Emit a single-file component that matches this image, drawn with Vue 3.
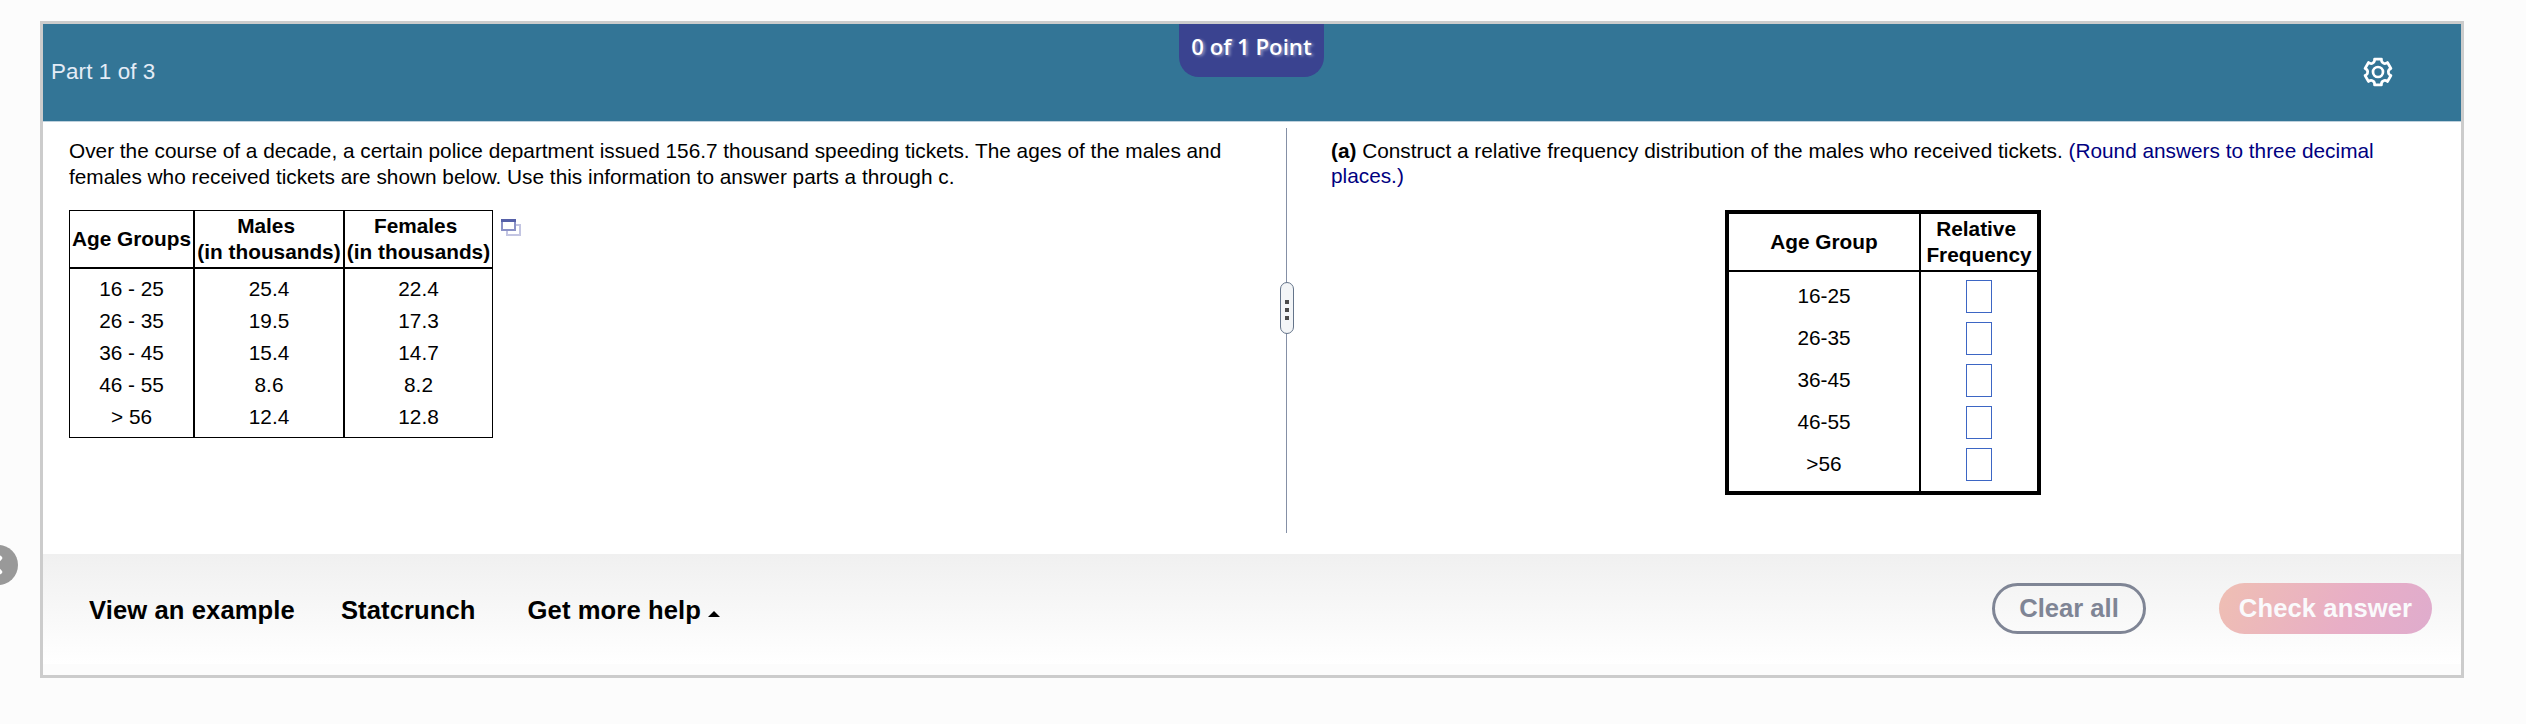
<template>
  <div class="page">
    <button class="prev" aria-label="Previous">
      <svg viewBox="0 0 40 40" width="40" height="40">
        <circle cx="20" cy="20" r="20" fill="#999" />
        <path d="M22 13 L15 20 L22 27" fill="none" stroke="#fff" stroke-width="4.5" stroke-linecap="round" />
      </svg>
    </button>

    <div class="player">
      <header class="top">
        <span class="part">Part 1 of 3</span>
        <span class="points">0 of 1 Point</span>
        <svg class="gear" viewBox="0 0 30 30" width="30" height="30">
          <path :d="gearPath" />
          <circle cx="15" cy="15" r="5" />
        </svg>
      </header>

      <main class="body">
        <section class="pane question">
          <p class="text">
            Over the course of a decade, a certain police department issued 156.7 thousand speeding tickets.
            The ages of the males and females who received tickets are shown below.
            Use this information to answer parts a through c.
          </p>
          <div class="data-row">
            <table class="data">
              <thead>
                <tr>
                  <th class="c-age">Age Groups</th>
                  <th class="c-male">Males&nbsp;<br />(in thousands)</th>
                  <th>Females&nbsp;<br />(in thousands)</th>
                </tr>
              </thead>
              <tbody>
                <tr v-for="r in rows" :key="r.age">
                  <td>{{ r.age }}</td>
                  <td>{{ r.males }}</td>
                  <td>{{ r.females }}</td>
                </tr>
              </tbody>
            </table>
            <svg class="popup" viewBox="0 0 20 17" width="20" height="17">
              <rect x="6" y="6" width="13" height="10" fill="#fff" stroke="#c3c5e2" stroke-width="2" />
              <rect x="1" y="1" width="13" height="10" fill="#fff" stroke="#8a91c6" stroke-width="2" />
              <rect x="0" y="0" width="15" height="3" fill="#5560a8" />
            </svg>
          </div>
        </section>

        <div class="divider">
          <div class="handle"><i></i><i></i><i></i></div>
        </div>

        <section class="pane answer">
          <p class="text">
            <b>(a)</b> Construct a relative frequency distribution of the males who received tickets.
            <span class="note">(Round answers to three decimal places.)</span>
          </p>
          <table class="entry">
            <thead>
              <tr>
                <th class="c-group">Age Group</th>
                <th>Relative&nbsp;<br />Frequency</th>
              </tr>
            </thead>
            <tbody>
              <tr v-for="g in groups" :key="g">
                <td>{{ g }}</td>
                <td><input v-model="answers[g]" type="text" /></td>
              </tr>
            </tbody>
          </table>
        </section>
      </main>

      <footer class="bottom">
        <nav class="links">
          <a>View an example</a>
          <a>Statcrunch</a>
          <a>Get more help<span class="caret"></span></a>
        </nav>
        <div class="actions">
          <button class="btn clear" @click="clearAll">Clear all</button>
          <button class="btn check" disabled>Check answer</button>
        </div>
      </footer>
    </div>
  </div>
</template>

<script setup>
import { reactive } from 'vue'

const rows = [
  { age: '16 - 25', males: '25.4', females: '22.4' },
  { age: '26 - 35', males: '19.5', females: '17.3' },
  { age: '36 - 45', males: '15.4', females: '14.7' },
  { age: '46 - 55', males: '8.6', females: '8.2' },
  { age: '> 56', males: '12.4', females: '12.8' }
]

const groups = ['16-25', '26-35', '36-45', '46-55', '>56']
const answers = reactive(Object.fromEntries(groups.map(g => [g, ''])))

function clearAll() {
  for (const g of groups) answers[g] = ''
}

// six-tooth gear outline, one tooth every 60deg
const gearPath = buildGear(15, 15, 13.4, 10.4)

function buildGear(cx, cy, outer, inner) {
  const pt = (r, deg) => {
    const a = (deg - 90) * Math.PI / 180
    return `${(cx + r * Math.cos(a)).toFixed(2)} ${(cy + r * Math.sin(a)).toFixed(2)}`
  }
  let d = ''
  for (let i = 0; i < 6; i++) {
    const t = i * 60
    d += `${i ? 'L' : 'M'}${pt(outer, t - 15)} L${pt(outer, t + 15)} `
    d += `Q${pt(inner, t + 17)} ${pt(inner, t + 30)} Q${pt(inner, t + 43)} ${pt(outer, t + 45)} `
  }
  return d + 'Z'
}
</script>

<style>
body { background: #fcfcfc; }
</style>

<style scoped>
.page {
  position: relative;
  box-sizing: border-box;
  height: 724px;
  padding: 21px 62px 46px 40px;
  overflow: hidden;
  font-family: "Liberation Sans", Arial, sans-serif;
  font-size: 20.8px;
  line-height: 26px;
  color: #000;
}

.prev {
  position: absolute;
  left: -22px;
  top: 545px;
  padding: 0;
  border: 0;
  background: none;
}
.prev svg { display: block; }

.player {
  box-sizing: border-box;
  height: 657px;
  border: 3px solid #ccc;
  background: #fff;
  display: flex;
  flex-direction: column;
}

/* header */
.top {
  position: relative;
  box-sizing: border-box;
  height: 98px;
  padding: 0 68px 2px 8px;
  background: #337596;
  border-bottom: 1px solid #bdd0dc;
  display: flex;
  align-items: center;
  justify-content: space-between;
}
.part { font-size: 22.4px; letter-spacing: 0.1px; color: #e4ecf6; }
.points {
  position: absolute;
  left: 1136px;
  top: 0;
  width: 145px;
  height: 53px;
  border-radius: 0 0 20px 20px;
  background: #3a4390;
  color: #fff;
  font-family: "Open Sans", "Noto Sans", sans-serif;
  font-size: 22.2px;
  font-weight: 600;
  line-height: 46px;
  text-align: center;
  white-space: nowrap;
  text-shadow: 2px 1px 3px rgba(255, 255, 255, 0.45);
}
.gear { fill: none; stroke: #fff; stroke-width: 2.7; stroke-linejoin: round; }

/* body */
.body { display: flex; height: 432px; }
.pane { box-sizing: border-box; padding-top: 16px; }
.text { margin: 0; }
.question { width: 1243px; padding-left: 26px; padding-right: 6px; }
.answer { flex: 1; padding-left: 44px; padding-right: 26px; }
.answer .text { line-height: 25px; }
.note { color: #000080; }

.divider {
  width: 1px;
  margin: 6px 0 21px;
  background: #8590a6;
  display: flex;
  flex-direction: column;
  align-items: center;
}
.handle {
  box-sizing: border-box;
  flex: none;
  width: 14px;
  height: 52px;
  margin-top: 154px;
  border: 1px solid #64748a;
  border-radius: 7px;
  background: #f3f5f7;
  display: flex;
  flex-direction: column;
  align-items: center;
  justify-content: center;
  gap: 4px;
  padding-top: 4px;
}
.handle i { width: 4px; height: 4px; background: #4a4a4a; }

table { border-collapse: separate; border-spacing: 0; table-layout: fixed; box-sizing: border-box; }
th, td { padding: 0; text-align: center; box-sizing: border-box; white-space: nowrap; }

.data-row { display: flex; align-items: flex-start; margin-top: 20px; gap: 8px; }
.data { width: 424px; height: 228px; border: 1px solid #000; }
.data th { height: 58px; border-bottom: 2px solid #000; }
.data td { height: 32px; line-height: 32px; }
.data th:not(:last-child), .data td:not(:last-child) { border-right: 2px solid #000; }
.data tbody tr:first-child td { height: 36px; padding-top: 4px; }
.data tbody tr:last-child td { height: 36px; padding-bottom: 4px; }
.c-age { width: 125px; }
.c-male { width: 150px; }
.popup { margin-top: 9px; }

.entry { width: 316px; height: 285px; margin: 22px auto 0; border: 4px solid #000; }
.entry th { height: 58px; border-bottom: 2px solid #000; }
.entry td { height: 42px; line-height: 42px; }
.entry th:first-child, .entry td:first-child { border-right: 2px solid #000; }
.entry tbody tr:first-child td { height: 45px; padding-top: 3px; }
.entry tbody tr:last-child td { height: 48px; padding-bottom: 6px; }
.c-group { width: 192px; }
.entry input {
  display: block;
  box-sizing: border-box;
  width: 26px;
  height: 33px;
  margin: 0 auto;
  padding: 0;
  border: 1px solid #3d66c4;
  background: #fff;
}

/* footer */
.bottom {
  box-sizing: border-box;
  height: 121px;
  padding: 29px 29px 0 46px;
  background: linear-gradient(#f0f0f0, #fff 110px, #fcfcfc 110px);
  display: flex;
  align-items: flex-start;
  justify-content: space-between;
  font-size: 25.6px;
  font-weight: bold;
}
.links { display: flex; gap: 46px; padding-top: 14px; letter-spacing: 0.1px; }
.links a:nth-child(2) { margin-right: 6px; }
.caret {
  display: inline-block;
  margin-left: 7px;
  vertical-align: 2px;
  border: 6px solid transparent;
  border-top: 0;
  border-bottom-color: #000;
}
.actions { display: flex; gap: 73px; }
.btn {
  box-sizing: border-box;
  height: 51px;
  padding: 0;
  border: 0;
  border-radius: 26px;
  font: bold 25.6px/45px "Liberation Sans", Arial, sans-serif;
  white-space: nowrap;
}
.clear { width: 154px; border: 3px solid #7f8595; background: transparent; color: #7f8595; }
.check { width: 213px; background: linear-gradient(115deg, #efbfb3, #e8aec6 60%, #dfaccd); color: #fafafc; letter-spacing: 0.1px; }
</style>
